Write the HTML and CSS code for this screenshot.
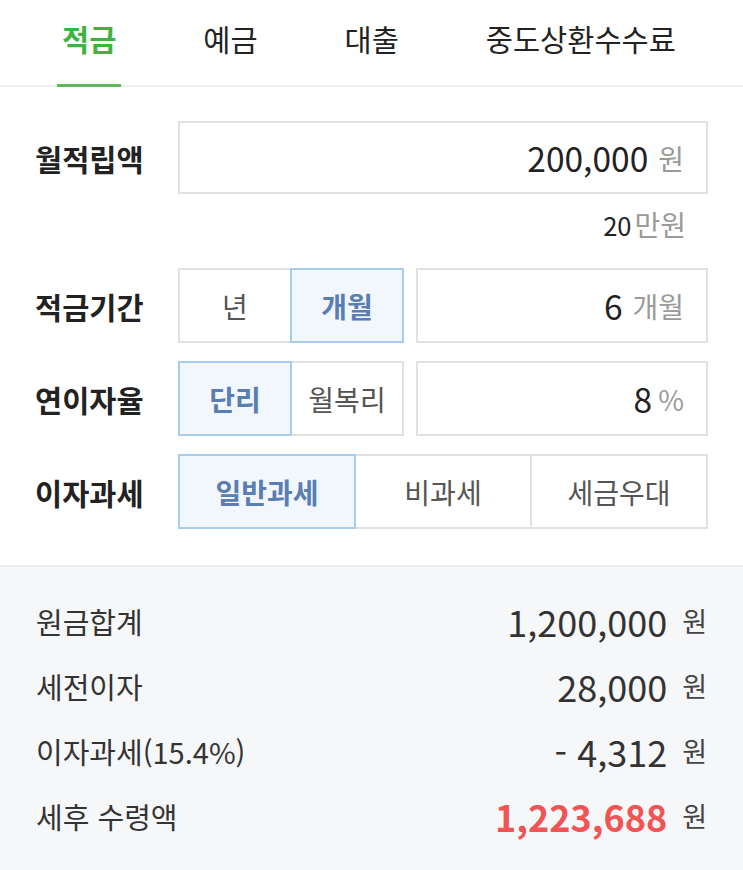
FILE: index.html
```html
<!DOCTYPE html>
<html lang="ko">
<head>
<meta charset="utf-8">
<title>적금 계산기</title>
<link rel="stylesheet" href="styles.css">
</head>
<body>
<nav class="tabs">
  <div class="tab active">적금</div>
  <div class="tab">예금</div>
  <div class="tab">대출</div>
  <div class="tab">중도상환수수료</div>
</nav>

<section class="form">
  <div class="row row-first">
    <div class="label">월적립액</div>
    <div class="field field-full">
      <span class="value">200,000</span><span class="unit">원</span>
    </div>
  </div>
  <div class="sub"><span class="sub-value">20</span><span class="sub-unit">만원</span></div>

  <div class="rows">
    <div class="row">
      <div class="label">적금기간</div>
      <div class="controls">
        <div class="seg seg-two">
          <div class="btn">년</div>
          <div class="btn on">개월</div>
        </div>
        <div class="field field-rest">
          <span class="value">6</span><span class="unit">개월</span>
        </div>
      </div>
    </div>
    <div class="row">
      <div class="label">연이자율</div>
      <div class="controls">
        <div class="seg seg-two">
          <div class="btn on">단리</div>
          <div class="btn">월복리</div>
        </div>
        <div class="field field-rest">
          <span class="value">8</span><span class="unit unit-tight">%</span>
        </div>
      </div>
    </div>
    <div class="row">
      <div class="label">이자과세</div>
      <div class="seg seg-three">
        <div class="btn on">일반과세</div>
        <div class="btn">비과세</div>
        <div class="btn">세금우대</div>
      </div>
    </div>
  </div>
</section>

<section class="summary">
  <div class="sum-row">
    <div class="sum-label">원금합계</div>
    <div class="sum-val"><span class="num">1,200,000</span><span class="won">원</span></div>
  </div>
  <div class="sum-row">
    <div class="sum-label">세전이자</div>
    <div class="sum-val"><span class="num">28,000</span><span class="won">원</span></div>
  </div>
  <div class="sum-row">
    <div class="sum-label">이자과세(15.4%)</div>
    <div class="sum-val"><span class="num">- 4,312</span><span class="won">원</span></div>
  </div>
  <div class="sum-row">
    <div class="sum-label">세후 수령액</div>
    <div class="sum-val"><span class="num num-red">1,223,688</span><span class="won">원</span></div>
  </div>
</section>
</body>
</html>
```

FILE: styles.css
```css
* { box-sizing: border-box; }

html, body {
  margin: 0;
  padding: 0;
  background: #ffffff;
}

body {
  width: 743px;
  height: 870px;
  overflow: hidden;
  font-family: "Noto Sans CJK KR", "Noto Sans", sans-serif;
  color: #222222;
}

/* Tabs */
.tabs {
  display: flex;
  gap: 77px;
  padding-left: 57px;
  border-bottom: 2px solid #eeeeee;
}

.tab {
  padding: 18px 5px 26px;
  margin-bottom: -2px;
  font-size: 29.5px;
  line-height: 40px;
  color: #222222;
  border-bottom: 3px solid transparent;
}

.tab.active {
  color: #3db442;
  font-weight: 700;
  border-bottom-color: #5cb85c;
}

/* Form */
.form {
  padding: 34px 35px 36px;
}

.row {
  display: flex;
  align-items: center;
  height: 75px;
}

.row-first {
  height: 73px;
}

.label {
  width: 143px;
  flex: none;
  font-size: 29.5px;
  font-weight: 700;
  color: #222222;
  line-height: 40px;
}

.field {
  height: 100%;
  border: 2px solid #e1e1e1;
  display: flex;
  align-items: center;
  justify-content: flex-end;
  padding-right: 22px;
  gap: 10px;
}

.field-full { flex: 1; }

.field-rest {
  width: 292px;
  flex: none;
}

.value {
  font-size: 33.5px;
  color: #222222;
  line-height: 40px;
}

.unit {
  font-size: 28px;
  color: #9a9a9a;
  line-height: 40px;
}

.unit-tight { margin-left: -4px; }

.sub {
  display: flex;
  justify-content: flex-end;
  align-items: center;
  gap: 3px;
  padding-right: 22px;
  margin: 15px 0 29px;
  height: 30px;
}

.sub-value {
  font-size: 25.5px;
  color: #222222;
}

.sub-unit {
  font-size: 28px;
  color: #9a9a9a;
}

.rows {
  display: flex;
  flex-direction: column;
  gap: 18px;
}

.controls {
  flex: 1;
  height: 100%;
  display: flex;
  gap: 12px;
}

.seg {
  display: flex;
  height: 100%;
}

.seg-two {
  width: 226px;
  flex: none;
}

.seg-three {
  flex: 1;
}

.btn {
  flex: 1;
  display: flex;
  align-items: center;
  justify-content: center;
  border: 2px solid #e1e1e1;
  font-size: 28px;
  color: #555555;
  background: #ffffff;
}

.btn + .btn {
  margin-left: -2px;
}

.btn.on {
  position: relative;
  z-index: 1;
  border-color: #a7cdee;
  background: #f1f7fd;
  color: #5a7db3;
  font-weight: 700;
}

/* Summary */
.summary {
  border-top: 2px solid #eeeeee;
  background: #f6f7f9;
  padding: 21px 36px 0;
  height: 305px;
}

.sum-row {
  display: flex;
  align-items: center;
  justify-content: space-between;
  height: 65px;
}

.sum-label {
  font-size: 29px;
  color: #333333;
}

.sum-val {
  display: flex;
  align-items: center;
  gap: 15px;
}

.num {
  font-size: 36px;
  color: #333333;
  line-height: 44px;
}

.num-red {
  color: #f05454;
  font-weight: 700;
}

.won {
  font-size: 27px;
  color: #444444;
}
```
